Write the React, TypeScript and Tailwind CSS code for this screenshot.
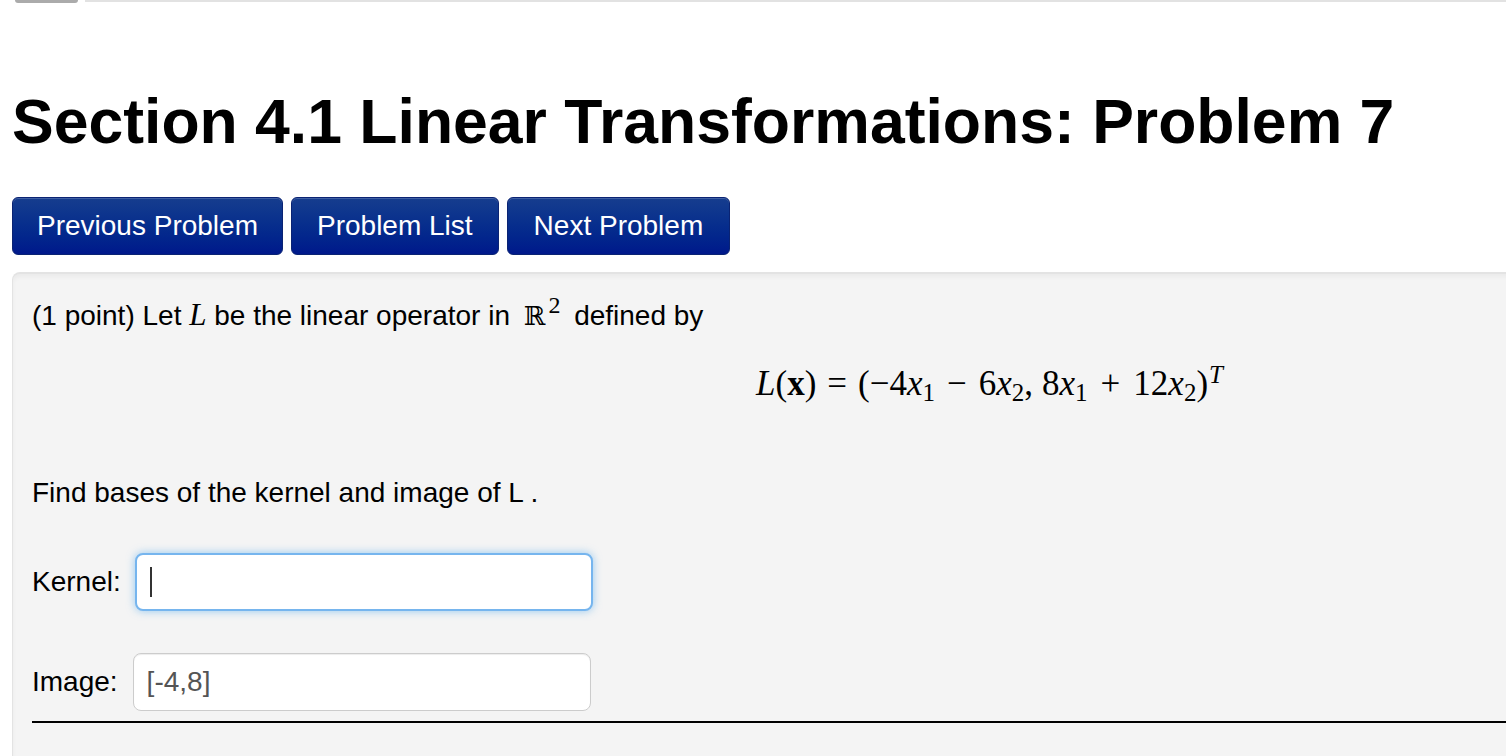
import React from "react";

function Btn({ children, px }: { children: React.ReactNode; px: string }) {
  return (
    <div className={"h-[58px] flex items-center rounded-[6px] border border-[#0a2373] bg-gradient-to-b from-[#163d8e] to-[#00188b] text-white text-[28px] leading-none shadow-[inset_0_1px_0_rgba(255,255,255,0.18)] " + px}>
      {children}
    </div>
  );
}

export default function App() {
  return (
    <div className="w-[1506px] h-[756px] overflow-hidden bg-white text-black font-['Liberation_Sans',Arial,sans-serif]">
      <div className="flex h-[3px] items-start">
        <div className="ml-[15px] w-[63px] h-[3px] bg-[#ababab] rounded-b-[3px]" />
        <div className="ml-[7px] flex-1 h-[2px] bg-[#e2e2e2]" />
      </div>
      <div className="pl-3">
        <h1 className="mt-[81px] text-[62.5px] font-bold leading-[74px] whitespace-nowrap">
          Section 4.1 Linear Transformations: Problem 7
        </h1>
        <div className="mt-[39px] flex gap-2">
          <Btn px="px-[24px]">Previous Problem</Btn>
          <Btn px="px-[25px]">Problem List</Btn>
          <Btn px="px-[26px]">Next Problem</Btn>
        </div>
        <div className="mt-[17px] w-[1960px] h-[500px] bg-[#f4f4f4] rounded-tl-[8px] border-l border-t-2 border-[#e3e3e3] shadow-[inset_0_3px_4px_rgba(0,0,0,0.04)] pl-[19px] pt-[21px] text-[28px]">
          <div className="h-[40px] leading-[40px] whitespace-nowrap">
            (1 point) Let{" "}
            <i className="font-['Liberation_Serif',serif] text-[31px]">L</i> be the linear operator in{" "}
            <span className="font-['DejaVu_Serif',serif] text-[26px] ml-[6px]">ℝ</span>
            <sup className="font-['Liberation_Serif',serif] text-[24px] ml-[3px] mr-[6px]">2</sup> defined by
          </div>
          <div className="mt-[24px] ml-[724px] h-[50px] leading-[50px] font-['Liberation_Serif',serif] text-[35px] whitespace-nowrap">
            <i>L</i>(<b>x</b>)<span className="mx-[11px]">=</span>(−4<i>x</i>
            <sub className="text-[25px]">1</sub>
            <span className="mx-[12px]">−</span>6<i>x</i>
            <sub className="text-[25px]">2</sub>,<span className="ml-[9px]">8</span><i>x</i>
            <sub className="text-[25px]">1</sub>
            <span className="mx-[13px]">+</span>12<i>x</i>
            <sub className="text-[25px]">2</sub>)
            <sup className="text-[25px] ml-[1px]">
              <i>T</i>
            </sup>
          </div>
          <div className="mt-[64px] h-[40px] leading-[40px]">Find bases of the kernel and image of L .</div>
          <div className="mt-[40px] flex items-center">
            <span className="leading-[40px]">Kernel:</span>
            <div className="ml-[14px] w-[458px] h-[58px] rounded-[8px] border-2 border-[#76b5ee] bg-white shadow-[0_0_8px_rgba(82,168,236,0.6)] flex items-center pl-[13px]">
              <div className="w-[2px] h-[30px] bg-[#333]" />
            </div>
          </div>
          <div className="mt-[42px] flex items-center">
            <span className="leading-[40px]">Image:</span>
            <div className="ml-[15px] w-[458px] h-[58px] rounded-[8px] border border-[#cccccc] bg-white shadow-[inset_0_1px_1px_rgba(0,0,0,0.075)] flex items-center pl-[13px] text-[#555] leading-none">
              [-4,8]
            </div>
          </div>
          <div className="mt-[10px] h-[2px] bg-black" />
        </div>
      </div>
    </div>
  );
}
